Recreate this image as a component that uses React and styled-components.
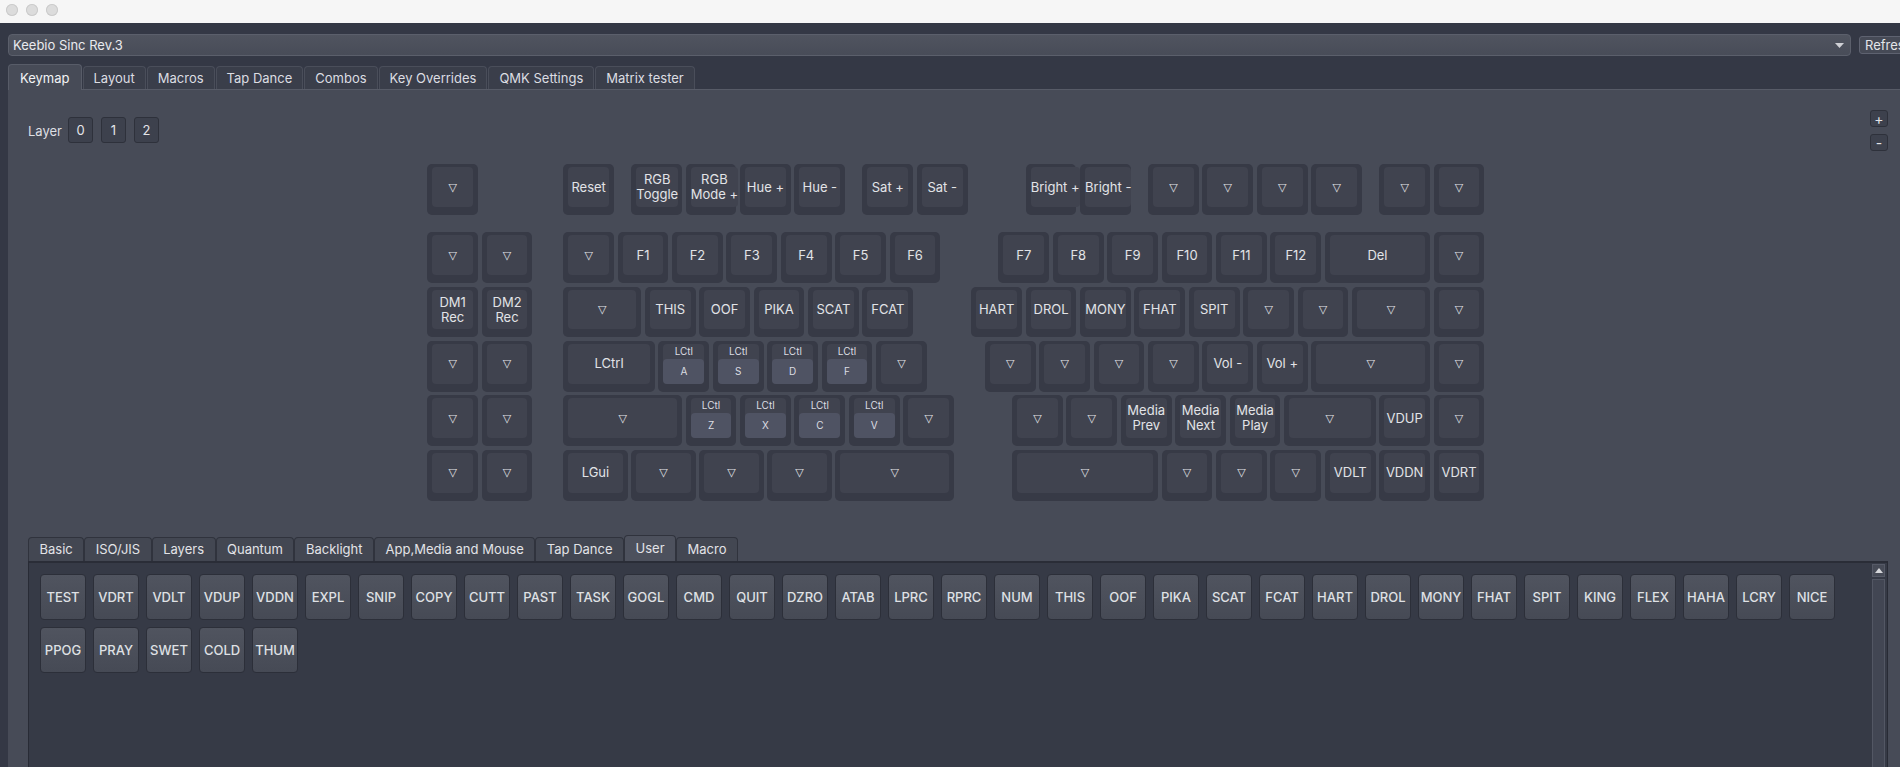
import React from "react";
import styled, { createGlobalStyle } from "styled-components";

// one keyboard unit in px, and the gap between two keys
const U = 54.4;
const GAP = 3.7;
const T = "▽";

// [x, y, width, label, tap label]
const KEYS = [
  [0, 0, 1, T], [2.5, 0, 1, "Reset"], [3.75, 0, 1, "RGB\nToggle"], [4.75, 0, 1, "RGB\nMode +"],
  [5.75, 0, 1, "Hue +"], [6.75, 0, 1, "Hue -"], [8, 0, 1, "Sat +"], [9, 0, 1, "Sat -"],
  [11, 0, 1, "Bright +"], [12, 0, 1, "Bright -"], [13.25, 0, 1, T], [14.25, 0, 1, T],
  [15.25, 0, 1, T], [16.25, 0, 1, T], [17.5, 0, 1, T], [18.5, 0, 1, T],

  [0, 1.25, 1, T], [1, 1.25, 1, T], [2.5, 1.25, 1, T], [3.5, 1.25, 1, "F1"], [4.5, 1.25, 1, "F2"],
  [5.5, 1.25, 1, "F3"], [6.5, 1.25, 1, "F4"], [7.5, 1.25, 1, "F5"], [8.5, 1.25, 1, "F6"],
  [10.5, 1.25, 1, "F7"], [11.5, 1.25, 1, "F8"], [12.5, 1.25, 1, "F9"], [13.5, 1.25, 1, "F10"],
  [14.5, 1.25, 1, "F11"], [15.5, 1.25, 1, "F12"], [16.5, 1.25, 2, "Del"], [18.5, 1.25, 1, T],

  [0, 2.25, 1, "DM1\nRec"], [1, 2.25, 1, "DM2\nRec"], [2.5, 2.25, 1.5, T], [4, 2.25, 1, "THIS"],
  [5, 2.25, 1, "OOF"], [6, 2.25, 1, "PIKA"], [7, 2.25, 1, "SCAT"], [8, 2.25, 1, "FCAT"],
  [10, 2.25, 1, "HART"], [11, 2.25, 1, "DROL"], [12, 2.25, 1, "MONY"], [13, 2.25, 1, "FHAT"],
  [14, 2.25, 1, "SPIT"], [15, 2.25, 1, T], [16, 2.25, 1, T], [17, 2.25, 1.5, T], [18.5, 2.25, 1, T],

  [0, 3.25, 1, T], [1, 3.25, 1, T], [2.5, 3.25, 1.75, "LCtrl"], [4.25, 3.25, 1, "LCtl", "A"],
  [5.25, 3.25, 1, "LCtl", "S"], [6.25, 3.25, 1, "LCtl", "D"], [7.25, 3.25, 1, "LCtl", "F"],
  [8.25, 3.25, 1, T], [10.25, 3.25, 1, T], [11.25, 3.25, 1, T], [12.25, 3.25, 1, T],
  [13.25, 3.25, 1, T], [14.25, 3.25, 1, "Vol -"], [15.25, 3.25, 1, "Vol +"],
  [16.25, 3.25, 2.25, T], [18.5, 3.25, 1, T],

  [0, 4.25, 1, T], [1, 4.25, 1, T], [2.5, 4.25, 2.25, T], [4.75, 4.25, 1, "LCtl", "Z"],
  [5.75, 4.25, 1, "LCtl", "X"], [6.75, 4.25, 1, "LCtl", "C"], [7.75, 4.25, 1, "LCtl", "V"],
  [8.75, 4.25, 1, T], [10.75, 4.25, 1, T], [11.75, 4.25, 1, T], [12.75, 4.25, 1, "Media\nPrev"],
  [13.75, 4.25, 1, "Media\nNext"], [14.75, 4.25, 1, "Media\nPlay"], [15.75, 4.25, 1.75, T],
  [17.5, 4.25, 1, "VDUP"], [18.5, 4.25, 1, T],

  [0, 5.25, 1, T], [1, 5.25, 1, T], [2.5, 5.25, 1.25, "LGui"], [3.75, 5.25, 1.25, T],
  [5, 5.25, 1.25, T], [6.25, 5.25, 1.25, T], [7.5, 5.25, 2.25, T], [10.75, 5.25, 2.75, T],
  [13.5, 5.25, 1, T], [14.5, 5.25, 1, T], [15.5, 5.25, 1, T], [16.5, 5.25, 1, "VDLT"],
  [17.5, 5.25, 1, "VDDN"], [18.5, 5.25, 1, "VDRT"],
];

const TOP_TABS = ["Keymap", "Layout", "Macros", "Tap Dance", "Combos", "Key Overrides", "QMK Settings", "Matrix tester"];
const KEY_TABS = ["Basic", "ISO/JIS", "Layers", "Quantum", "Backlight", "App,Media and Mouse", "Tap Dance", "User", "Macro"];
const USER_KEYS = [
  "TEST", "VDRT", "VDLT", "VDUP", "VDDN", "EXPL", "SNIP", "COPY", "CUTT", "PAST", "TASK", "GOGL",
  "CMD", "QUIT", "DZRO", "ATAB", "LPRC", "RPRC", "NUM", "THIS", "OOF", "PIKA", "SCAT", "FCAT",
  "HART", "DROL", "MONY", "FHAT", "SPIT", "KING", "FLEX", "HAHA", "LCRY", "NICE", "PPOG", "PRAY",
  "SWET", "COLD", "THUM",
];

const GlobalStyle = createGlobalStyle`
  html, body {
    margin: 0;
    padding: 0;
    background: #343845;
  }
  body {
    font-family: Inter, "Noto Sans", sans-serif;
    font-size: 13px;
    color: #dedfe3;
    overflow: hidden;
  }
`;

const Window = styled.div`
  width: 1900px;
  height: 767px;
  overflow: hidden;
  background: #343845;
`;

const TitleBar = styled.div`
  height: 23px;
  background: #f6f6f6;
  display: flex;
  align-items: center;
  gap: 8px;
  padding-left: 6px;
  box-sizing: border-box;
`;

const Light = styled.span`
  width: 12px;
  height: 12px;
  border-radius: 50%;
  background: #dcdcdc;
  box-shadow: inset 0 0 0 1px #cbcbcb;
  margin-top: -3px;
`;

const Main = styled.div`
  padding: 11px 0 0 8px;
`;

const TopRow = styled.div`
  display: flex;
  align-items: flex-start;
  gap: 8px;
`;

const Combo = styled.div`
  flex-shrink: 0;
  width: 1843px;
  height: 22px;
  box-sizing: border-box;
  border: 1px solid #5b5f6b;
  border-radius: 4px;
  background: linear-gradient(#50545f, #484c58);
  display: flex;
  align-items: center;
  justify-content: space-between;
  padding: 0 6px 0 4px;
  color: #e9eaee;
`;

const RefreshButton = styled.div`
  flex-shrink: 0;
  margin-top: 2px;
  height: 18px;
  width: 80px;
  box-sizing: border-box;
  border: 1px solid #5e6270;
  border-radius: 3px;
  background: #464a56;
  padding-left: 5px;
  line-height: 16px;
  color: #e4e5e9;
`;

const TabBar = styled.div`
  display: flex;
  align-items: flex-end;
  height: 25px;
  margin-top: 8px;
`;

const Tab = styled.div`
  position: relative;
  z-index: 1;
  height: ${(p) => (p.$active ? 26 : 23)}px;
  margin-bottom: ${(p) => (p.$active ? -1 : 0)}px;
  margin-right: 1px;
  padding: 0 ${(p) => (p.$active ? 11 : 10)}px;
  box-sizing: border-box;
  display: flex;
  align-items: center;
  border: 1px solid ${(p) => (p.$active ? "#585c68" : "#4a4e5a")};
  border-bottom: none;
  border-radius: 4px 4px 0 0;
  background: ${(p) => (p.$active ? "#474b57" : "#3a3e4a")};
  color: ${(p) => (p.$active ? "#f2f3f5" : "#dcdde2")};
`;

const Pane = styled.div`
  height: 700px;
  background: #474b57;
  border-top: 1px solid #575b67;
  padding: 20px 12px 0 20px;
`;

const Header = styled.div`
  height: 54.3px;
  display: flex;
  justify-content: space-between;
  align-items: flex-start;
`;

const LayerGroup = styled.div`
  margin-top: 7.3px;
  display: flex;
  align-items: center;
  gap: 8px;
`;

const LayerLabel = styled.span`
  margin-right: -2px;
  margin-top: 1px;
`;

const SmallButton = styled.div`
  width: ${(p) => p.$w}px;
  height: ${(p) => p.$h}px;
  box-sizing: border-box;
  border: 1px solid #2e313b;
  border-radius: 3px;
  background: #3d414d;
  display: flex;
  align-items: center;
  justify-content: center;
  color: #e3e4e8;
  font-size: ${(p) => p.$size || 13}px;
`;

const ZoomColumn = styled.div`
  display: flex;
  flex-direction: column;
  gap: 7.4px;
`;

const Keyboard = styled.div`
  position: relative;
  margin-left: 399.3px;
  width: ${19.5 * U - GAP}px;
  height: ${5.25 * U + 50.7}px;
`;

const Key = styled.div`
  position: absolute;
  height: 50.7px;
  box-sizing: border-box;
  padding: 3px 5px 8px 5px;
  border-radius: 5px;
  background: #373a46;
  display: flex;
`;

const Cap = styled.div`
  flex: 1;
  border-radius: 4px;
  background: #40434f;
  display: flex;
  flex-direction: column;
  align-items: center;
  justify-content: center;
  text-align: center;
  white-space: pre;
  line-height: 15px;
  color: #e2e3e7;
  font-size: 13px;
`;

const Trans = styled.span`
  font-family: "DejaVu Sans", sans-serif;
  font-size: 11px;
  color: #e4e5e9;
`;

const HoldLabel = styled.div`
  height: 15px;
  line-height: 14px;
  font-size: 10px;
  color: #dcdde2;
`;

const TapCap = styled.div`
  flex: 1;
  align-self: stretch;
  border-radius: 4px;
  background: #4f5363;
  display: flex;
  align-items: center;
  justify-content: center;
  font-size: 10px;
  color: #dcdde2;
`;

const ModCap = styled(Cap)`
  justify-content: flex-start;
`;

const LowerTabs = styled.div`
  margin-top: 34px;
  height: 26px;
  display: flex;
  align-items: flex-end;
`;

const LowerTab = styled.div`
  height: ${(p) => (p.$active ? 26 : 24)}px;
  box-sizing: border-box;
  padding: 0 10.5px;
  display: flex;
  align-items: center;
  border: 1px solid #30333d;
  border-bottom: none;
  border-radius: 4px 4px 0 0;
  background: ${(p) => (p.$active ? "#4d515d" : "#434752")};
  color: #e2e3e7;
`;

const LowerPane = styled.div`
  display: flex;
  height: 220px;
  background: #363a46;
  border: 1px solid #282b35;
  border-top: 2px solid #2a2d37;
`;

const KeyGrid = styled.div`
  flex: 1;
  display: flex;
  flex-wrap: wrap;
  align-content: flex-start;
  gap: 7px;
  padding: 11px 12px 0 11px;
`;

const UserKey = styled.div`
  width: 46px;
  height: 46px;
  box-sizing: border-box;
  border: 1px solid #2c2f39;
  border-radius: 4px;
  background: linear-gradient(#50545f, #464a55);
  display: flex;
  align-items: center;
  justify-content: center;
  font-weight: 500;
  color: #dfe0e4;
`;

const Scrollbar = styled.div`
  width: 13px;
  margin: 1px 2px 0 0;
  display: flex;
  flex-direction: column;
  gap: 2px;
`;

const ScrollArrow = styled.div`
  height: 13px;
  box-sizing: border-box;
  border: 1px solid #565a67;
  background: #474b57;
  display: flex;
  align-items: center;
  justify-content: center;
`;

const ScrollTrack = styled.div`
  flex: 1;
  box-sizing: border-box;
  border: 1px solid #535764;
  background: #424653;
`;

function KeyView({ x, y, w, label, tap }) {
  const style = { left: x * U, top: y * U, width: w * U - GAP };
  if (tap) {
    return (
      <Key style={style}>
        <ModCap>
          <HoldLabel>{label}</HoldLabel>
          <TapCap>{tap}</TapCap>
        </ModCap>
      </Key>
    );
  }
  return (
    <Key style={style}>
      <Cap>{label === T ? <Trans>{T}</Trans> : label}</Cap>
    </Key>
  );
}

export default function App() {
  return (
    <Window>
      <GlobalStyle />
      <TitleBar>
        <Light />
        <Light />
        <Light />
      </TitleBar>
      <Main>
        <TopRow>
          <Combo>
            <span>Keebio Sinc Rev.3</span>
            <svg width="9" height="5" viewBox="0 0 9 5">
              <path d="M0 0h9L4.5 5z" fill="#cfd0d5" />
            </svg>
          </Combo>
          <RefreshButton>Refresh</RefreshButton>
        </TopRow>
        <TabBar>
          {TOP_TABS.map((t, i) => (
            <Tab key={t} $active={i === 0}>
              {t}
            </Tab>
          ))}
        </TabBar>
        <Pane>
          <Header>
            <LayerGroup>
              <LayerLabel>Layer</LayerLabel>
              {["0", "1", "2"].map((l) => (
                <SmallButton key={l} $w={25} $h={26}>
                  {l}
                </SmallButton>
              ))}
            </LayerGroup>
            <ZoomColumn>
              <SmallButton $w={18} $h={17} $size={14}>
                +
              </SmallButton>
              <SmallButton $w={18} $h={17} $size={14}>
                -
              </SmallButton>
            </ZoomColumn>
          </Header>
          <Keyboard>
            {KEYS.map(([x, y, w, label, tap], i) => (
              <KeyView key={i} x={x} y={y} w={w} label={label} tap={tap} />
            ))}
          </Keyboard>
          <LowerTabs>
            {KEY_TABS.map((t) => (
              <LowerTab key={t} $active={t === "User"}>
                {t}
              </LowerTab>
            ))}
          </LowerTabs>
          <LowerPane>
            <KeyGrid>
              {USER_KEYS.map((k) => (
                <UserKey key={k}>{k}</UserKey>
              ))}
            </KeyGrid>
            <Scrollbar>
              <ScrollArrow>
                <svg width="8" height="5" viewBox="0 0 8 5">
                  <path d="M0 5h8L4 0z" fill="#d6d7db" />
                </svg>
              </ScrollArrow>
              <ScrollTrack />
            </Scrollbar>
          </LowerPane>
        </Pane>
      </Main>
    </Window>
  );
}
